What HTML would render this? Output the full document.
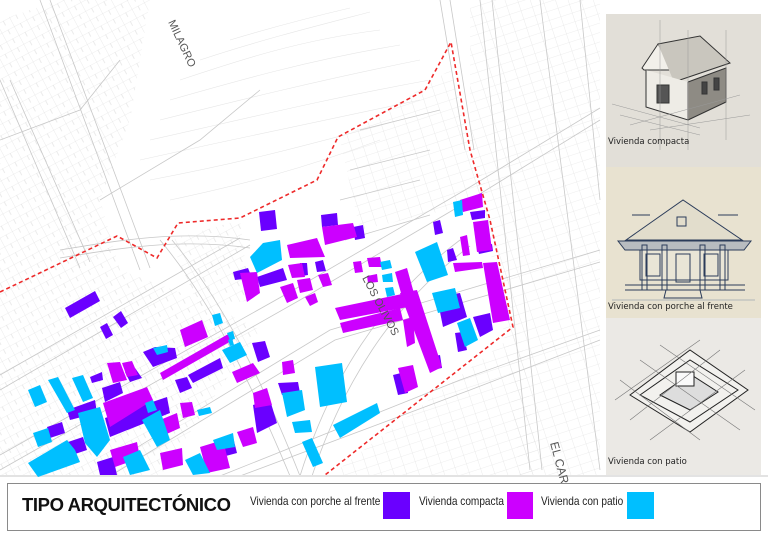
<!DOCTYPE html>
<html><head><meta charset="utf-8">
<style>
html,body{margin:0;padding:0;background:#fff;width:768px;height:538px;overflow:hidden;font-family:"Liberation Sans",sans-serif;}
#wrap{position:relative;width:768px;height:538px;}
svg{position:absolute;left:0;top:0;}
.cap{position:absolute;left:608px;font-family:"DejaVu Sans","Liberation Sans",sans-serif;font-size:8.5px;color:#222;}
.leg{position:absolute;font-family:"Liberation Sans",sans-serif;font-size:12px;color:#222;top:494px;white-space:nowrap;transform:scaleX(0.84);transform-origin:0 0;}
.sw{position:absolute;top:492px;height:27px;}
</style></head><body><div id="wrap">
<svg width="768" height="538" viewBox="0 0 768 538">
<defs>
<pattern id="pa" width="14" height="10" patternUnits="userSpaceOnUse" patternTransform="rotate(-28)">
<path d="M0,0 L14,0 M0,0 L0,10 M7,0 L7,5" stroke="#dedede" stroke-width="0.6" fill="none"/>
</pattern>
<pattern id="pb" width="12" height="9" patternUnits="userSpaceOnUse" patternTransform="rotate(-18)">
<path d="M0,0 L12,0 M0,0 L0,9" stroke="#dddddd" stroke-width="0.6" fill="none"/>
</pattern>
</defs>
<rect width="768" height="538" fill="#fff"/>
<path d="M0,20 L60,0 L150,0 L130,120 L100,200 L120,270 L0,300 Z" fill="url(#pa)"/>
<path d="M0,300 L120,270 L200,300 L260,330 L160,476 L0,476 Z" fill="url(#pa)"/>
<path d="M470,0 L600,0 L600,476 L520,476 L500,300 L470,150 Z" fill="url(#pb)"/>
<path d="M330,476 L520,330 L540,476 Z" fill="url(#pb)"/>
<path d="M340,140 L450,70 L490,200 L360,230 Z" fill="url(#pb)"/>
<path d="M170,240 L240,220 L250,300 L200,310 Z" fill="url(#pa)"/>
<g fill="none" stroke="#e6e6e6" stroke-width="0.6">
<path d="M180,80 C240,60 300,40 380,30"/><path d="M170,100 C240,80 310,60 400,45"/>
<path d="M160,120 C240,100 320,80 420,60"/><path d="M150,140 C240,120 320,100 430,80"/>
<path d="M140,160 C230,140 300,125 420,100"/><path d="M150,180 C230,165 290,150 400,120"/>
<path d="M170,200 C240,185 300,170 380,140"/><path d="M200,60 C260,40 320,25 370,12"/>
<path d="M230,40 C280,25 320,15 350,8"/>
</g>
<g fill="none" stroke="#c8c8c8" stroke-width="0.8">
<path d="M0,80 L80,268 M10,80 L90,262"/>
<path d="M40,0 L140,270 M50,0 L150,268"/>
<path d="M60,250 C120,240 180,230 250,240 M60,258 C120,248 180,238 250,248"/>
<path d="M0,470 L300,300 L470,200 L600,120 M0,455 L290,292 L465,190 L600,108"/>
<path d="M0,390 L250,245 M0,375 L240,238"/>
<path d="M100,470 L330,330 L600,250 M110,476 L335,340 L600,262"/>
<path d="M220,476 L460,380 L600,330 M240,476 L470,390 L600,340"/>
<path d="M480,0 L530,470 M492,0 L542,470"/>
<path d="M440,0 L465,150 M450,0 L474,150"/>
<path d="M540,0 L600,470 M580,0 L600,200"/>
<path d="M160,240 C210,300 250,380 290,476 M172,240 C222,300 262,380 300,476"/>
<path d="M460,240 C380,300 330,380 300,476 M470,246 C390,306 342,386 312,476"/>
<path d="M100,200 L200,140 L260,90 M0,140 L80,110 L120,60"/>
<path d="M340,200 L420,180 M345,240 L430,215 M350,170 L430,150 M360,130 L440,110"/>
</g>
<line x1="0" y1="476" x2="768" y2="476" stroke="#e3e3e3" stroke-width="2"/>
<g fill="#6a00ff">
<polygon points="65,308 95,291 100,301 70,318"/>
<polygon points="100,327 107,323 113,335 106,339"/>
<polygon points="113,317 121,311 128,323 121,328"/>
<polygon points="259,212 275,210 277,229 261,231"/>
<polygon points="321,215 337,213 338,225 322,227"/>
<polygon points="353,227 363,225 365,238 355,240"/>
<polygon points="233,272 248,268 252,278 235,280"/>
<polygon points="257,277 283,268 287,280 260,287"/>
<polygon points="300,263 307,263 308,275 302,276"/>
<polygon points="315,262 323,260 326,271 317,272"/>
<polygon points="433,222 440,220 443,233 435,235"/>
<polygon points="447,250 453,248 457,260 448,262"/>
<polygon points="437,297 460,293 467,317 443,327"/>
<polygon points="455,333 463,332 467,350 458,352"/>
<polygon points="473,317 490,313 493,330 480,337"/>
<polygon points="470,212 485,210 485,218 472,220"/>
<polygon points="477,247 492,244 493,251 479,254"/>
<polygon points="393,375 405,372 408,393 398,395"/>
<polygon points="430,357 440,355 442,368 432,370"/>
<polygon points="252,343 265,341 270,357 258,362"/>
<polygon points="143,352 155,347 175,348 177,358 153,367"/>
<polygon points="188,375 220,358 223,368 193,383"/>
<polygon points="175,380 187,377 192,388 180,393"/>
<polygon points="278,383 298,382 300,393 282,395"/>
<polygon points="67,410 95,400 97,413 70,420"/>
<polygon points="47,427 62,422 65,433 50,438"/>
<polygon points="68,442 83,437 87,450 72,455"/>
<polygon points="105,418 167,397 170,413 110,437"/>
<polygon points="97,462 113,457 117,475 100,475"/>
<polygon points="90,377 102,372 103,380 92,383"/>
<polygon points="102,388 120,382 123,393 105,402"/>
<polygon points="217,440 233,437 237,453 222,457"/>
<polygon points="253,405 270,400 277,423 257,433"/>
<polygon points="125,372 135,368 142,378 130,382"/>
</g>
<g fill="#cc00ff">
<polygon points="287,245 317,238 325,257 290,258"/>
<polygon points="322,227 353,223 357,237 325,245"/>
<polygon points="288,265 302,263 305,277 292,278"/>
<polygon points="280,287 293,283 298,298 287,303"/>
<polygon points="297,280 310,278 313,290 300,293"/>
<polygon points="305,297 315,293 318,302 310,306"/>
<polygon points="318,275 328,273 332,285 323,287"/>
<polygon points="240,273 257,272 260,293 247,302"/>
<polygon points="353,262 361,261 363,272 355,273"/>
<polygon points="367,258 380,257 382,267 369,267"/>
<polygon points="335,308 407,293 408,307 340,320"/>
<polygon points="340,323 400,308 403,320 343,333"/>
<polygon points="395,272 407,268 415,297 403,300"/>
<polygon points="400,293 417,290 442,367 430,373"/>
<polygon points="403,320 413,317 415,343 407,347"/>
<polygon points="453,263 482,262 483,268 455,272"/>
<polygon points="483,263 497,262 510,320 493,323"/>
<polygon points="460,200 482,193 483,207 463,212"/>
<polygon points="473,222 488,220 492,250 477,252"/>
<polygon points="460,237 467,235 470,255 463,256"/>
<polygon points="398,368 413,365 418,387 405,393"/>
<polygon points="180,330 202,320 208,337 185,347"/>
<polygon points="160,373 230,333 233,340 163,380"/>
<polygon points="232,372 253,363 260,373 237,383"/>
<polygon points="282,362 293,360 295,373 283,375"/>
<polygon points="253,393 267,388 272,405 255,408"/>
<polygon points="237,432 253,427 257,443 243,447"/>
<polygon points="103,403 147,387 153,400 110,427"/>
<polygon points="107,363 120,362 127,380 113,383"/>
<polygon points="122,363 132,361 138,375 127,377"/>
<polygon points="180,403 192,402 195,415 183,418"/>
<polygon points="155,422 177,413 180,428 160,437"/>
<polygon points="110,450 137,442 140,458 115,467"/>
<polygon points="160,453 182,448 183,465 163,470"/>
<polygon points="200,447 223,440 230,468 207,473"/>
<polygon points="367,276 377,274 378,282 368,283"/>
</g>
<g fill="#00bfff">
<polygon points="250,257 263,243 280,240 282,260 257,273"/>
<polygon points="415,252 437,242 448,275 427,282"/>
<polygon points="432,293 455,288 460,308 438,313"/>
<polygon points="457,323 470,318 478,340 465,347"/>
<polygon points="453,202 462,200 463,215 455,217"/>
<polygon points="380,262 390,260 392,268 382,270"/>
<polygon points="382,275 392,273 393,282 383,282"/>
<polygon points="385,288 393,287 395,295 387,297"/>
<polygon points="315,367 342,363 347,402 320,407"/>
<polygon points="333,425 377,403 380,413 340,438"/>
<polygon points="282,393 302,390 305,410 287,417"/>
<polygon points="292,422 310,420 312,432 295,433"/>
<polygon points="302,442 312,438 323,463 313,467"/>
<polygon points="212,315 220,313 223,323 215,326"/>
<polygon points="222,350 240,342 247,355 230,363"/>
<polygon points="228,340 232,338 234,345 230,346"/>
<polygon points="28,390 40,385 47,402 35,407"/>
<polygon points="48,380 58,377 75,410 67,413"/>
<polygon points="72,378 83,375 93,398 83,402"/>
<polygon points="33,433 48,428 52,442 38,447"/>
<polygon points="28,463 67,440 75,450 80,462 38,477"/>
<polygon points="78,413 100,407 110,440 97,457 85,443"/>
<polygon points="142,420 160,410 170,440 157,447"/>
<polygon points="123,457 140,450 150,470 130,475"/>
<polygon points="185,460 200,453 210,473 193,475"/>
<polygon points="145,403 153,400 157,410 148,413"/>
<polygon points="153,348 167,345 168,352 157,355"/>
<polygon points="197,410 210,407 212,413 199,416"/>
<polygon points="227,333 233,331 235,339 230,340"/>
<polygon points="213,440 233,433 235,447 217,450"/>
</g>
<polyline points="0,292 117,236 157,258 178,223 240,218 317,180 338,137 425,90 451,42 470,150 490,220 513,327 325,475" fill="none" stroke="#ee2a2a" stroke-width="1.6" stroke-dasharray="4,3"/>
<g font-family="Liberation Sans,sans-serif" fill="#555" font-size="11">
<text x="168" y="22" transform="rotate(65 168 22)">MILAGRO</text>
<text x="362" y="278" transform="rotate(62 362 278)">LOS OLIVOS</text>
<text x="550" y="443" transform="rotate(75 550 443)" font-size="12">EL CARI</text>
</g>
<rect x="606" y="14" width="155" height="153" fill="#e2dfd8"/>
<rect x="606" y="167" width="155" height="151" fill="#e8e2d0"/>
<rect x="606" y="318" width="155" height="157" fill="#ebe9e5"/>
<g fill="none" stroke="#333" stroke-width="1">
<path d="M642,68 L658,44 L674,70 L644,70 Z" fill="#f2f0ea"/>
<path d="M658,44 L700,36 L730,63 L674,82" fill="#c9c6be"/>
<path d="M646,70 L646,107 L688,120 L688,82" fill="#eeece6"/>
<path d="M688,82 L726,68 L726,102 L688,120" fill="#8e8b84"/>
<rect x="657" y="85" width="12" height="18" fill="#555"/>
<rect x="702" y="82" width="5" height="12" fill="#444"/>
<rect x="714" y="78" width="5" height="12" fill="#444"/>
<path d="M612,104 L700,128 M630,125 L740,95 M650,130 L750,115 M620,115 L700,135 M660,20 L660,150 M688,30 L688,150 M726,30 L726,140" stroke="#999" stroke-width="0.5"/>
</g>
<g fill="none" stroke="#2b3c5a" stroke-width="1">
<path d="M626,240 L683,200 L742,240 Z" fill="#e2ddcc"/>
<path d="M632,215 L650,215 M718,215 L738,215"/>
<path d="M618,241 L751,241 L744,250 L625,250 Z" fill="#b8bcc0"/>
<rect x="640" y="250" width="88" height="30" fill="#e9e5d6"/>
<rect x="642" y="245" width="5" height="45"/><rect x="662" y="245" width="5" height="45"/>
<rect x="700" y="245" width="5" height="45"/><rect x="720" y="245" width="5" height="45"/>
<rect x="646" y="254" width="14" height="22"/><rect x="704" y="254" width="14" height="22"/>
<rect x="676" y="254" width="14" height="28"/>
<rect x="677" y="217" width="9" height="9"/>
<path d="M625,285 L745,285 M625,290 L745,290 M666,290 L700,290 L702,298 L664,298 Z"/>
<path d="M612,300 L755,300" stroke="#7a88a0" stroke-width="0.6"/>
</g>
<g fill="none" stroke="#222" stroke-width="1">
<path d="M630,395 L690,350 L748,390 L690,432 Z" fill="#f2f1ee"/>
<path d="M640,395 L690,360 L738,390 L690,422 Z"/>
<path d="M660,395 L690,374 L718,392 L690,410 Z" fill="#ddd"/>
<rect x="676" y="372" width="18" height="14" fill="#fafafa"/>
<path d="M620,380 L700,440 M640,360 L740,430 M660,345 L755,410 M615,400 L700,340 M630,420 L720,350 M650,440 L745,370" stroke="#777" stroke-width="0.6"/>
</g>
</svg>
<div class="cap" style="top:137px">Vivienda compacta</div>
<div class="cap" style="top:302px">Vivienda con porche al frente</div>
<div class="cap" style="top:457px">Vivienda con patio</div>
<div style="position:absolute;left:7px;top:483px;width:752px;height:46px;border:1.5px solid #8a8a8a;background:#fff;"></div>
<div style="position:absolute;left:22px;top:494px;font-size:18.5px;font-weight:bold;color:#111;letter-spacing:-0.4px;">TIPO ARQUITECTÓNICO</div>
<div class="leg" style="left:250px">Vivienda con porche al frente</div>
<div class="sw" style="left:383px;width:27px;background:#6a00ff"></div>
<div class="leg" style="left:419px">Vivienda compacta</div>
<div class="sw" style="left:507px;width:26px;background:#cc00ff"></div>
<div class="leg" style="left:541px">Vivienda con patio</div>
<div class="sw" style="left:627px;width:27px;background:#00bfff"></div>
</div></body></html>
